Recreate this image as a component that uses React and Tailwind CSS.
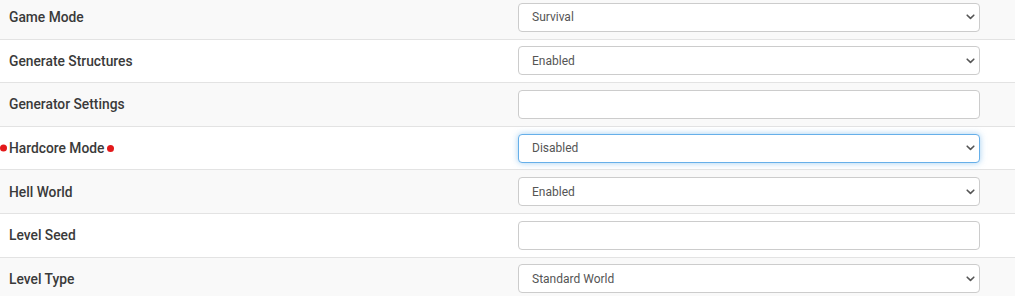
import React from 'react';

const rows = [
  { label: 'Game Mode', type: 'select', value: 'Survival' },
  { label: 'Generate Structures', type: 'select', value: 'Enabled' },
  { label: 'Generator Settings', type: 'input', value: '' },
  { label: 'Hardcore Mode', type: 'select', value: 'Disabled', focused: true, marked: true },
  { label: 'Hell World', type: 'select', value: 'Enabled' },
  { label: 'Level Seed', type: 'input', value: '' },
  { label: 'Level Type', type: 'select', value: 'Standard World' },
];

const Chevron = () => (
  <svg width="9" height="6" viewBox="0 0 9 6" className="shrink-0">
    <path d="M1.2 1.2l3.3 3.2 3.3-3.2" fill="none" stroke="#555555" strokeWidth="1.6" strokeLinecap="round" strokeLinejoin="round" />
  </svg>
);

const Field = ({ row }) => {
  const border = row.focused
    ? 'border-[#66afe9] shadow-[0_0_6px_rgba(102,175,233,0.6)]'
    : 'border-[#cccccc]';
  return (
    <div
      className={`flex items-center justify-between h-[29px] w-[462px] rounded-[4px] border bg-white pl-[13px] pr-[4px] ${border}`}
    >
      <span className="text-[12px] text-[#555555]">{row.value}</span>
      {row.type === 'select' && <Chevron />}
    </div>
  );
};

export default function App() {
  return (
    <div className="bg-white h-[296px] overflow-hidden" style={{ fontFamily: 'Roboto, "Liberation Sans", sans-serif' }}>
      <div className="w-[1015px] -mt-[4px]">
        {rows.map((row, i) => (
          <div
            key={row.label}
            className={`flex items-center h-[43.6px] border-b border-[#e3e3e3] ${i % 2 === 0 ? 'bg-[#f9f9f9]' : 'bg-white'}`}
          >
            <div className="w-[518px] relative pl-[9px]">
              {row.marked && (
                <span className="absolute left-0 top-1/2 -translate-y-1/2 w-[7px] h-[7px] rounded-full bg-[#e3191b]" />
              )}
              <span className="text-[13.8px] font-medium text-[#3a3a3a]">{row.label}</span>
              {row.marked && (
                <span className="inline-block ml-[3px] w-[7px] h-[7px] rounded-full bg-[#e3191b] align-middle" />
              )}
            </div>
            <Field row={row} />
          </div>
        ))}
      </div>
    </div>
  );
}
